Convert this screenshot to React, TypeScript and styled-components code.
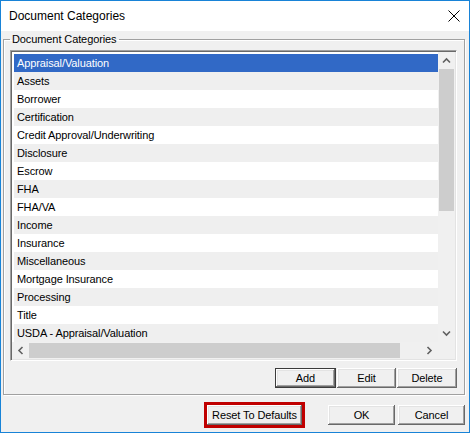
import React from 'react';
import styled, { createGlobalStyle } from 'styled-components';

const GlobalStyle = createGlobalStyle`
  html, body {
    margin: 0;
    padding: 0;
    background: #ffffff;
  }
`;

const Window = styled.div`
  width: 470px;
  height: 433px;
  box-sizing: border-box;
  border: 1px solid #1883d7;
  background: #f0f0f0;
  display: flex;
  flex-direction: column;
  font-family: 'Liberation Sans', Arial, sans-serif;
  font-size: 11px;
  letter-spacing: -0.1px;
  color: #000;
  overflow: hidden;
`;

const TitleBar = styled.div`
  height: 30px;
  flex-shrink: 0;
  background: #ffffff;
  display: flex;
  align-items: center;
  justify-content: space-between;
  padding: 0 9px 0 8px;
  font-size: 12px;
  letter-spacing: 0;
`;

const CloseButton = styled.div`
  width: 12px;
  height: 12px;
  display: flex;
  margin-top: -1px;
`;

const Body = styled.div`
  flex: 1;
  display: flex;
  flex-direction: column;
  padding: 2px 4px 0 2px;
`;

const GroupBox = styled.fieldset`
  margin: 0;
  padding: 4px 7px 6px 6px;
  border: 1px solid #a0a0a0;
  box-shadow: 1px 1px 0 #ffffff, inset 1px 1px 0 #ffffff;
  display: flex;
  flex-direction: column;
  gap: 7px;
  min-width: 0;
`;

const Legend = styled.legend`
  padding: 0 2px;
  margin-left: 0;
  line-height: 13px;
  font-size: 11px;
`;

const ListBox = styled.div`
  height: 311px;
  box-sizing: border-box;
  border-style: solid;
  border-width: 1px;
  border-color: #a0a0a0 #ffffff #ffffff #a0a0a0;
  box-shadow: inset 1px 1px 0 #696969, inset -1px -1px 0 #e3e3e3;
  padding: 1px;
  display: grid;
  grid-template-columns: 1fr 17px;
  grid-template-rows: 1fr 17px;
  background: #ffffff;
`;

const Rows = styled.div`
  padding: 2px 0 0 2px;
  overflow: hidden;
`;

const Row = styled.div<{ $selected?: boolean; $alt?: boolean }>`
  height: 18px;
  line-height: 18px;
  padding-left: 3px;
  white-space: nowrap;
  background: ${({ $selected, $alt }) =>
    $selected ? '#3169c6' : $alt ? '#efefef' : '#ffffff'};
  color: ${({ $selected }) => ($selected ? '#ffffff' : '#000000')};
`;

const VScroll = styled.div`
  background: #f0f0f0;
  display: flex;
  flex-direction: column;
`;

const HScroll = styled.div`
  background: #f0f0f0;
  display: flex;
`;

const Corner = styled.div`
  background: #f0f0f0;
`;

const Arrow = styled.div`
  width: 17px;
  height: 17px;
  flex-shrink: 0;
  display: flex;
  align-items: center;
  justify-content: center;
`;

const VThumb = styled.div`
  height: 142px;
  margin: 0 1px;
  background: #cdcdcd;
`;

const HThumb = styled.div`
  width: 371px;
  margin: 1px 0;
  background: #cdcdcd;
`;

const Track = styled.div`
  flex: 1;
`;

const ButtonRow = styled.div<{ $gap: number }>`
  display: flex;
  justify-content: flex-end;
  gap: ${({ $gap }) => $gap}px;
`;

const Button = styled.button<{ $width: number; $default?: boolean; $marked?: boolean }>`
  width: ${({ $width }) => $width}px;
  height: 20px;
  box-sizing: border-box;
  background: #f0f0f0;
  font-family: 'Liberation Sans', Arial, sans-serif;
  font-size: 11px;
  letter-spacing: -0.1px;
  color: #000;
  padding: 0;
  border: ${({ $default }) => ($default ? '1px solid #3c3c3c' : 'none')};
  box-shadow: inset -1px -1px 0 #696969, inset 1px 1px 0 #ffffff,
    inset -2px -2px 0 #a0a0a0, inset 2px 2px 0 #e3e3e3;
  outline: ${({ $marked }) => ($marked ? '3px solid #c00000' : 'none')};
  outline-offset: 0;
`;

const BottomBar = styled.div`
  display: flex;
  justify-content: flex-end;
  align-items: center;
  padding-top: 10px;
`;

const Spacer = styled.div<{ $w: number }>`
  width: ${({ $w }) => $w}px;
`;

const Chevron: React.FC<{ dir: 'up' | 'down' | 'left' | 'right' }> = ({ dir }) => {
  const rot = { up: 0, right: 90, down: 180, left: 270 }[dir];
  return (
    <svg width="9" height="9" viewBox="0 0 9 9" style={{ transform: `rotate(${rot}deg)` }}>
      <polyline points="1,6.5 4.5,3 8,6.5" fill="none" stroke="#606060" strokeWidth="1.6" />
    </svg>
  );
};

const items = [
  'Appraisal/Valuation',
  'Assets',
  'Borrower',
  'Certification',
  'Credit Approval/Underwriting',
  'Disclosure',
  'Escrow',
  'FHA',
  'FHA/VA',
  'Income',
  'Insurance',
  'Miscellaneous',
  'Mortgage Insurance',
  'Processing',
  'Title',
  'USDA - Appraisal/Valuation',
];

const App: React.FC = () => {
  return (
    <>
      <GlobalStyle />
      <Window>
        <TitleBar>
          <span>Document Categories</span>
          <CloseButton>
            <svg width="12" height="12" viewBox="0 0 12 12">
              <path d="M0.5 0.5 L11.5 11.5 M11.5 0.5 L0.5 11.5" stroke="#000" strokeWidth="1" />
            </svg>
          </CloseButton>
        </TitleBar>
        <Body>
          <GroupBox>
            <Legend>Document Categories</Legend>
            <ListBox>
              <Rows>
                {items.map((item, i) => (
                  <Row key={item} $selected={i === 0} $alt={i % 2 === 1}>
                    {item}
                  </Row>
                ))}
              </Rows>
              <VScroll>
                <Arrow>
                  <Chevron dir="up" />
                </Arrow>
                <VThumb />
                <Track />
                <Arrow>
                  <Chevron dir="down" />
                </Arrow>
              </VScroll>
              <HScroll>
                <Arrow>
                  <Chevron dir="left" />
                </Arrow>
                <HThumb />
                <Track />
                <Arrow>
                  <Chevron dir="right" />
                </Arrow>
              </HScroll>
              <Corner />
            </ListBox>
            <ButtonRow $gap={1}>
              <Button $width={61} $default>
                Add
              </Button>
              <Button $width={59}>Edit</Button>
              <Button $width={60}>Delete</Button>
            </ButtonRow>
          </GroupBox>
          <BottomBar>
            <Button $width={95} $marked>
              Reset To Defaults
            </Button>
            <Spacer $w={26} />
            <ButtonRow $gap={3}>
              <Button $width={67}>OK</Button>
              <Button $width={67}>Cancel</Button>
            </ButtonRow>
          </BottomBar>
        </Body>
      </Window>
    </>
  );
};

export default App;
